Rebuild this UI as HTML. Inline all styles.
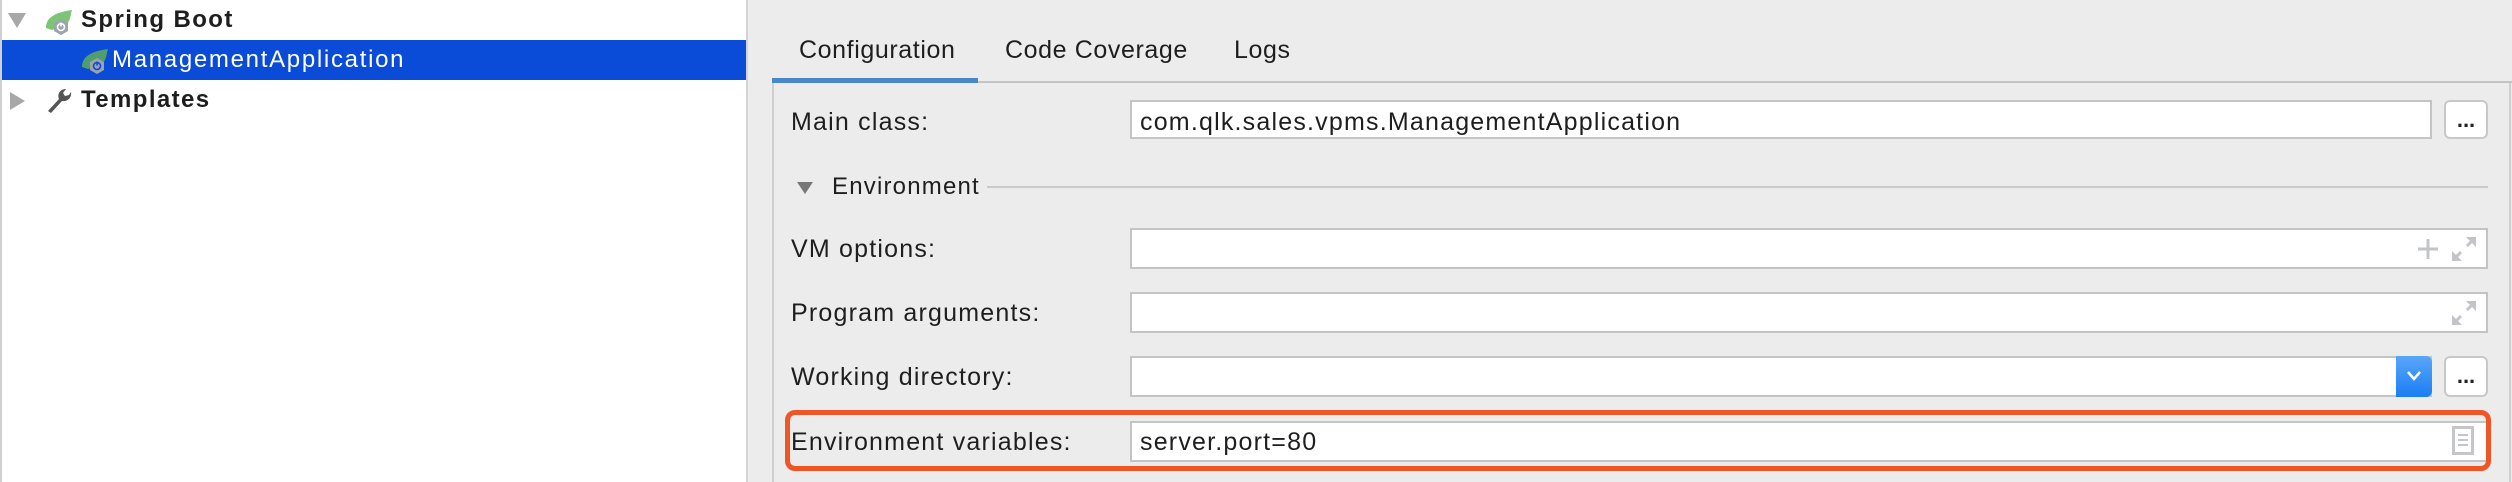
<!DOCTYPE html>
<html><head><meta charset="utf-8"><style>
*{margin:0;padding:0;box-sizing:border-box}
body{width:2512px;height:482px;overflow:hidden;background:#ececec;font-family:"Liberation Sans",sans-serif;position:relative;color:#1e1e1e}
.abs{position:absolute}
.left{left:0;top:0;width:746px;height:482px;background:#fff;border-left:2px solid #d0d0d0}
.div{left:746px;top:0;width:2px;height:482px;background:#d4d4d4}
.t{position:absolute;white-space:nowrap;font-size:25px;line-height:30px;letter-spacing:1.2px}
.field{position:absolute;background:#fff;border:2px solid #c4c4c4}
.btn{position:absolute;background:#fff;border:2px solid #c8c8c8;border-radius:6px;font-size:22px;text-align:center;line-height:36px;font-weight:bold;color:#222}
</style></head><body>
<div class="abs left"></div>
<div class="abs div"></div>
<!-- tree -->
<div class="abs" style="left:8px;top:13px;width:0;height:0;border-left:9px solid transparent;border-right:9px solid transparent;border-top:15px solid #a8a8a8"></div>
<svg class="abs" style="left:44px;top:8px" width="30" height="30" viewBox="0 0 30 30"><path d="M2 20 C2 8 14 4 28 2 C26 8 27 14 20 18 L8 22 Z" fill="#7cc576"/><polygon points="17,11 24,15 24,23 17,27 10,23 10,15" fill="#9ba3ab"/><circle cx="17" cy="19" r="3.5" fill="none" stroke="#fff" stroke-width="1.6"/><line x1="17" y1="14.5" x2="17" y2="18.5" stroke="#fff" stroke-width="1.6"/></svg>
<div class="t" style="left:81px;top:5px;font-weight:bold;font-size:24px;letter-spacing:1.4px">Spring Boot</div>
<div class="abs" style="left:2px;top:40px;width:744px;height:40px;background:#0a4bd8"></div>
<svg class="abs" style="left:80px;top:47px" width="30" height="30" viewBox="0 0 30 30"><path d="M2 20 C2 8 14 4 28 2 C26 8 27 14 20 18 L8 22 Z" fill="#4f9e6e"/><polygon points="17,11 24,15 24,23 17,27 10,23 10,15" fill="#9ba3ab"/><circle cx="17" cy="19" r="3.5" fill="none" stroke="#0a4bd8" stroke-width="1.6"/><line x1="17" y1="14.5" x2="17" y2="18.5" stroke="#0a4bd8" stroke-width="1.6"/></svg>
<div class="t" style="left:112px;top:45px;color:#fff;font-size:24px;letter-spacing:1.7px">ManagementApplication</div>
<div class="abs" style="left:10px;top:92px;width:0;height:0;border-top:9px solid transparent;border-bottom:9px solid transparent;border-left:15px solid #a8a8a8"></div>
<svg class="abs" style="left:45px;top:86px" width="28" height="28" viewBox="0 0 28 28"><path d="M3 25 L14 13 C12 8 15 3 21 3 L18 7 L20 10 L24 9 L26 6 C27 12 22 16 17 15 L6 27 Z" fill="#555"/></svg>
<div class="t" style="left:81px;top:85px;font-weight:bold;font-size:24px;letter-spacing:1.4px">Templates</div>
<!-- tabs -->
<div class="t" style="left:799px;top:35px;letter-spacing:0.6px">Configuration</div>
<div class="t" style="left:1005px;top:35px;letter-spacing:0.6px">Code Coverage</div>
<div class="t" style="left:1234px;top:35px;letter-spacing:0.6px">Logs</div>
<div class="abs" style="left:772px;top:78px;width:206px;height:5px;background:#4a86c8"></div>
<div class="abs" style="left:978px;top:81px;width:1534px;height:2px;background:#c4c4c4"></div>
<div class="abs" style="left:772px;top:83px;width:2px;height:399px;background:#cfcfcf"></div>
<div class="abs" style="left:2509px;top:83px;width:2px;height:399px;background:#cfcfcf"></div>
<!-- rows -->
<div class="t" style="left:791px;top:107px">Main class:</div>
<div class="field" style="left:1130px;top:100px;width:1302px;height:39px"></div>
<div class="t" style="left:1140px;top:107px">com.qlk.sales.vpms.ManagementApplication</div>
<div class="btn" style="left:2444px;top:100px;width:44px;height:39px">...</div>
<div class="abs" style="left:797px;top:182px;width:0;height:0;border-left:8px solid transparent;border-right:8px solid transparent;border-top:12px solid #777"></div>
<div class="t" style="left:832px;top:172px;font-size:24px">Environment</div>
<div class="abs" style="left:987px;top:186px;width:1501px;height:2px;background:#cacaca"></div>
<div class="t" style="left:791px;top:234px">VM options:</div>
<div class="field" style="left:1130px;top:228px;width:1358px;height:41px"></div>
<svg class="abs" style="left:2418px;top:236px" width="62" height="26" viewBox="0 0 62 26"><path d="M10 3 V23 M0 13 H20" stroke="#c2c4c8" stroke-width="3"/><g fill="#c2c4c8"><polygon points="34,25 34,15 44,25"/><polygon points="58,1 58,11 48,1"/></g><path d="M37 22 L43 16 M55 4 L49 10" stroke="#c2c4c8" stroke-width="3"/></svg>
<div class="t" style="left:791px;top:298px">Program arguments:</div>
<div class="field" style="left:1130px;top:292px;width:1358px;height:41px"></div>
<svg class="abs" style="left:2452px;top:300px" width="26" height="26" viewBox="34 0 26 26"><g fill="#c2c4c8"><polygon points="34,25 34,15 44,25"/><polygon points="58,1 58,11 48,1"/></g><path d="M37 22 L43 16 M55 4 L49 10" stroke="#c2c4c8" stroke-width="3"/></svg>
<div class="t" style="left:791px;top:362px">Working directory:</div>
<div class="field" style="left:1130px;top:356px;width:1302px;height:41px"></div>
<div class="abs" style="left:2396px;top:356px;width:36px;height:41px;background:linear-gradient(#5aa6f8,#1a7ef5);border-radius:0 6px 6px 0"></div>
<svg class="abs" style="left:2406px;top:370px" width="16" height="12"><path d="M2 2 L8 9 L14 2" stroke="#fff" stroke-width="2.5" fill="none"/></svg>
<div class="btn" style="left:2444px;top:356px;width:44px;height:41px">...</div>
<div class="t" style="left:791px;top:427px">Environment variables:</div>
<div class="field" style="left:1130px;top:421px;width:1358px;height:41px"></div>
<div class="t" style="left:1140px;top:427px">server.port=80</div>
<svg class="abs" style="left:2452px;top:426px" width="22" height="29"><rect x="1.5" y="1.5" width="19" height="26" fill="none" stroke="#c4c6ca" stroke-width="3"/><path d="M6 9 H16 M6 14 H16 M6 19 H16" stroke="#c4c6ca" stroke-width="2"/></svg>
<div class="abs" style="left:785px;top:410px;width:1706px;height:61px;border:5px solid #ee5527;border-radius:10px"></div>
</body></html>
